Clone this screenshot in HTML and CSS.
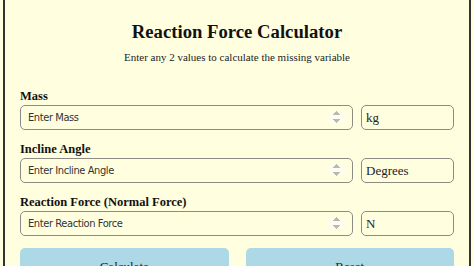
FILE: index.html
```html
<!DOCTYPE html>
<html>
<head>
    <meta charset="UTF-8">
    <title>Reaction Force Calculator</title>
    <link rel="stylesheet" href="styles.css">
</head>
<body>
    <div class="container">
        <h1>Reaction Force Calculator</h1>
        <p class="subtitle">Enter any 2 values to calculate the missing variable</p>

        <div class="input-group">
            <label class="input-label" for="mass">Mass</label>
            <div class="input-row">
                <input class="input-field" type="number" id="mass" placeholder="Enter Mass">
                <input class="unit-field" type="text" value="kg" readonly>
            </div>
        </div>

        <div class="input-group">
            <label class="input-label" for="angle">Incline Angle</label>
            <div class="input-row">
                <input class="input-field" type="number" id="angle" placeholder="Enter Incline Angle">
                <input class="unit-field" type="text" value="Degrees" readonly>
            </div>
        </div>

        <div class="input-group">
            <label class="input-label" for="force">Reaction Force (Normal Force)</label>
            <div class="input-row">
                <input class="input-field" type="number" id="force" placeholder="Enter Reaction Force">
                <input class="unit-field" type="text" value="N" readonly>
            </div>
        </div>

        <div class="buttons">
            <button>Calculate</button>
            <button>Reset</button>
        </div>
    </div>
</body>
</html>
```

FILE: styles.css
```css
body {
    font-family: "Liberation Serif", "Times New Roman", serif;
    background-color: #ffffe0;
    margin: 0;
    padding: 0;
}

.container {
    margin: 0 3px;
    padding: 21px 15px 0;
    border: solid #333;
    border-width: 0 2px;
    height: 266px;
    box-sizing: border-box;
    overflow: hidden;
}

h1 {
    font-size: 18.7px;
    line-height: 21px;
    text-align: center;
    margin: 0 0 8px;
    color: #111;
}

.subtitle {
    font-size: 11px;
    line-height: 14px;
    text-align: center;
    margin: 0 0 25px;
    color: #222;
}

.input-group {
    margin-bottom: 12px;
}

.input-label {
    display: block;
    font-size: 12.5px;
    font-weight: bold;
    line-height: 15px;
    margin-bottom: 1px;
    color: #111;
}

.input-row {
    display: flex;
    gap: 8px;
}

.input-field,
.unit-field {
    box-sizing: border-box;
    height: 25px;
    background-color: #ffffe0;
    border: 1.5px solid #8c8c84;
    border-radius: 5px;
    color: #222;
}

.input-field {
    flex: 1;
    padding: 0 8px 0 7px;
    font-family: "DejaVu Sans Condensed", "DejaVu Sans", sans-serif;
    font-size: 11px;
    letter-spacing: -0.4px;
}

.input-field::placeholder {
    color: #333;
}

.input-field::-webkit-inner-spin-button {
    opacity: 0.6;
}

.unit-field {
    width: 93px;
    padding: 0 4px;
    font-family: "Liberation Serif", serif;
    font-size: 13px;
}

.buttons {
    display: grid;
    grid-template-columns: 1fr 1fr;
    gap: 17px;
    margin-top: 5px;
}

button {
    background-color: #add8e6;
    border: none;
    border-radius: 5px;
    height: 30px;
    font-family: "Liberation Serif", serif;
    font-size: 13px;
    color: #222;
    padding: 8px 0 0;
}
```
